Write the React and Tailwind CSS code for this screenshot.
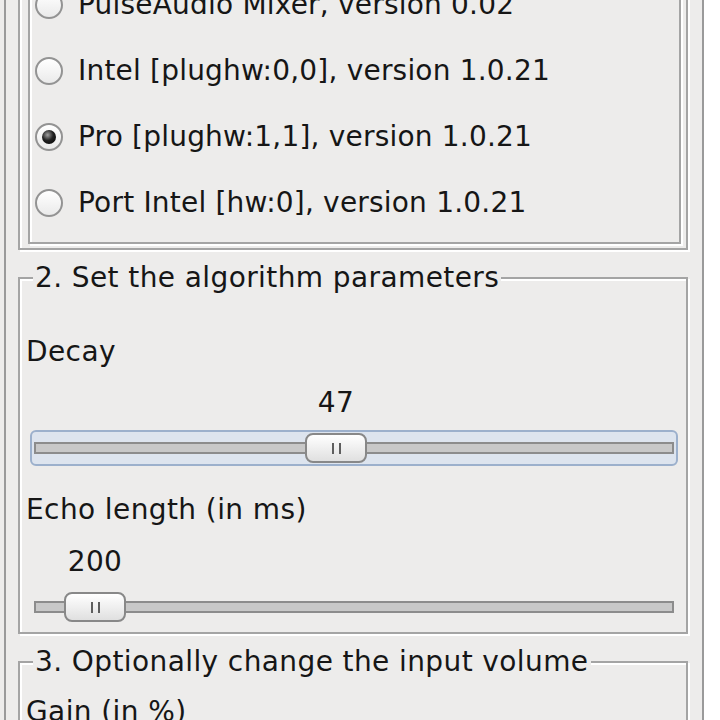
import React from "react";

function Radio({ checked, label }) {
  return (
    <div className="flex h-[66px] items-center">
      <div className="flex h-[28px] w-[28px] shrink-0 items-center justify-center rounded-full border-2 border-[#939393] bg-gradient-to-b from-white to-[#eaeaea]">
        {checked && (
          <div className="h-[14px] w-[14px] rounded-full bg-[radial-gradient(circle_at_40%_35%,#a0a0a0_0%,#222_45%,#000_100%)]" />
        )}
      </div>
      <span className="ml-[15px] whitespace-nowrap tracking-[0.2px]">{label}</span>
    </div>
  );
}

function ValueLabel({ text, knobLeft }) {
  return (
    <div className="mx-[4px] flex h-[32px]">
      <div
        className="flex w-[62px] shrink-0 justify-center whitespace-nowrap"
        style={{ marginLeft: knobLeft + 6 }}
      >
        {text}
      </div>
    </div>
  );
}

function Slider({ knobLeft, focused }) {
  return (
    <div
      className={
        focused
          ? "mx-[4px] flex h-[36px] items-center rounded-[6px] border-2 border-[#9cb0cc] bg-[#dde4ee] px-[2px]"
          : "mx-[4px] flex h-[36px] items-center rounded-[6px] border-2 border-transparent px-[2px]"
      }
    >
      <div className="relative h-[12px] flex-1 border-2 border-[#8c8c8c] bg-[#c8c8c8]">
        <div
          className="absolute top-1/2 flex h-[30px] w-[62px] -translate-y-1/2 items-center justify-center gap-[5px] rounded-[8px] border-2 border-[#888888] bg-gradient-to-b from-white to-[#e0e0e0]"
          style={{ left: knobLeft }}
        >
          <div className="h-[11px] w-[2px] bg-[#5e5e5e]" />
          <div className="h-[11px] w-[2px] bg-[#5e5e5e]" />
        </div>
      </div>
    </div>
  );
}

const etched =
  "border-2 border-[#a4a4a4] shadow-[2px_2px_0_#ffffff,inset_2px_2px_0_#ffffff]";

export default function App() {
  return (
    <div className="flex h-[720px] w-[720px] overflow-hidden bg-white font-['DejaVu_Sans',sans-serif] text-[28px] leading-[32px] tracking-[0.4px] text-[#161616]">
      <div className="flex h-full w-[704px] bg-[#edeceb] pl-[4px]">
        <div className="h-full flex-1 overflow-hidden border-x-2 border-[#9a9a9a]">
          {/* Section 1 */}
          <div className={`ml-[12px] mr-[14px] mt-[-38px] pb-[4px] pl-[8px] pr-[5px] ${etched}`}>
            <div className={`pb-[6px] pl-[5px] pt-[6px] ${etched}`}>
              <Radio label="PulseAudio Mixer, version 0.02" />
              <Radio label="Intel [plughw:0,0], version 1.0.21" />
              <Radio checked label="Pro [plughw:1,1], version 1.0.21" />
              <Radio label="Port Intel [hw:0], version 1.0.21" />
            </div>
          </div>

          {/* Section 2 */}
          <fieldset className={`ml-[12px] mr-[14px] mt-[12px] min-w-0 p-0 ${etched}`}>
            <legend className="ml-[13px] bg-[#edeceb] px-[2px] leading-[32px]">
              2. Set the algorithm parameters
            </legend>
            <div className="pb-[7px] pl-[6px] pr-[4px] pt-[42px]">
              <div className="h-[32px]">Decay</div>
              <div className="mt-[19px]">
                <ValueLabel text="47" knobLeft={269} />
              </div>
              <div className="mt-[11px]">
                <Slider focused knobLeft={269} />
              </div>
              <div className="mt-[28px] h-[32px]">Echo length (in ms)</div>
              <div className="mt-[20px]">
                <ValueLabel text="200" knobLeft={28} />
              </div>
              <div className="mt-[11px]">
                <Slider knobLeft={28} />
              </div>
            </div>
          </fieldset>

          {/* Section 3 */}
          <fieldset className={`ml-[12px] mr-[14px] mt-[12px] min-w-0 p-0 ${etched}`}>
            <legend className="ml-[13px] bg-[#edeceb] px-[2px] leading-[32px]">
              3. Optionally change the input volume
            </legend>
            <div className="pb-[40px] pl-[6px] pr-[4px] pt-[18px]">
              <div className="h-[32px]">Gain (in %)</div>
            </div>
          </fieldset>
        </div>
      </div>
    </div>
  );
}
